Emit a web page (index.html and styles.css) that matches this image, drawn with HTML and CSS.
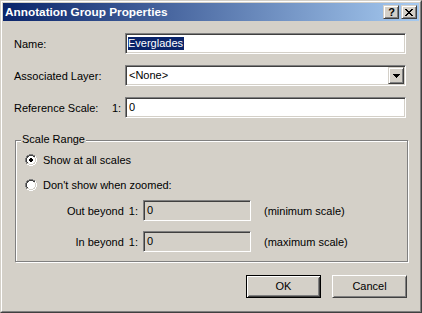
FILE: index.html
```html
<!DOCTYPE html>
<html>
<head>
<meta charset="utf-8">
<title>Annotation Group Properties</title>
<link rel="stylesheet" href="styles.css">
</head>
<body>
<div class="window">
  <div class="window-inner">
    <div class="titlebar">
      <span class="title">Annotation Group Properties</span>
      <div class="cap-btns">
        <div class="cap-btn help">?</div>
        <div class="cap-btn close">
          <svg width="8" height="7" viewBox="0 0 8 7"><path fill="#000" d="M0 0h2v1h-2zM6 0h2v1h-2zM1 1h2v1h-2zM5 1h2v1h-2zM2 2h4v1h-4zM3 3h2v1h-2zM2 4h4v1h-4zM1 5h2v1h-2zM5 5h2v1h-2zM0 6h2v1h-2zM6 6h2v1h-2z"/></svg>
        </div>
      </div>
    </div>
    <div class="content">
      <div class="fields">
        <label class="lbl span2">Name:</label>
        <div class="textbox"><span class="sel">Everglades</span></div>

        <label class="lbl span2">Associated Layer:</label>
        <div class="textbox combo">
          <span class="combo-text">&lt;None&gt;</span>
          <div class="drop-btn">
            <svg width="7" height="4" viewBox="0 0 7 4"><path fill="#000" d="M0 0h7v1h-1v1h-1v1h-1v1h-1v-1h-1v-1h-1v-1h-1z"/></svg>
          </div>
        </div>

        <label class="lbl">Reference Scale:</label>
        <span class="lbl one">1:</span>
        <div class="textbox"><span class="val">0</span></div>
      </div>

      <div class="group">
        <span class="legend">Scale Range</span>
        <div class="radio-row first">
          <span class="radio checked"><svg width="12" height="12" viewBox="0 0 12 12"><path fill="#808080" d="M4 0h4v1h-4zM2 1h2v1h-2zM8 1h2v1h-2zM1 2h1v2h-1zM0 4h1v4h-1zM1 8h1v2h-1z"/><path fill="#404040" d="M4 1h4v1h-4zM2 2h2v1h-2zM8 2h2v1h-2zM2 3h1v1h-1zM1 4h1v4h-1zM2 8h1v1h-1z"/><path fill="#fff" d="M10 2h1v2h-1zM11 4h1v4h-1zM10 8h1v2h-1zM8 10h2v1h-2zM2 10h2v1h-2zM4 11h4v1h-4z"/><path fill="#d4d0c8" d="M9 3h1v1h-1zM10 4h1v4h-1zM9 8h1v1h-1zM8 9h1v1h-1zM3 9h1v1h-1zM4 10h4v1h-4z"/><path fill="#fff" d="M4 2h4v1h-4zM3 3h6v1h-6zM2 4h8v4h-8zM3 8h6v1h-6zM4 9h4v1h-4z"/><path class="dot" fill="#000" d="M5 4h2v1h-2zM4 5h4v2h-4zM5 7h2v1h-2z"/></svg></span>
          <span class="radio-text">Show at all scales</span>
        </div>
        <div class="radio-row second">
          <span class="radio"><svg width="12" height="12" viewBox="0 0 12 12"><path fill="#808080" d="M4 0h4v1h-4zM2 1h2v1h-2zM8 1h2v1h-2zM1 2h1v2h-1zM0 4h1v4h-1zM1 8h1v2h-1z"/><path fill="#404040" d="M4 1h4v1h-4zM2 2h2v1h-2zM8 2h2v1h-2zM2 3h1v1h-1zM1 4h1v4h-1zM2 8h1v1h-1z"/><path fill="#fff" d="M10 2h1v2h-1zM11 4h1v4h-1zM10 8h1v2h-1zM8 10h2v1h-2zM2 10h2v1h-2zM4 11h4v1h-4z"/><path fill="#d4d0c8" d="M9 3h1v1h-1zM10 4h1v4h-1zM9 8h1v1h-1zM8 9h1v1h-1zM3 9h1v1h-1zM4 10h4v1h-4z"/><path fill="#fff" d="M4 2h4v1h-4zM3 3h6v1h-6zM2 4h8v4h-8zM3 8h6v1h-6zM4 9h4v1h-4z"/></svg></span>
          <span class="radio-text">Don't show when zoomed:</span>
        </div>
        <div class="range-row out">
          <span class="range-lbl">Out beyond<span class="one-b">1:</span></span>
          <div class="textbox disabled"><span class="val">0</span></div>
          <span class="hint">(minimum scale)</span>
        </div>
        <div class="range-row in">
          <span class="range-lbl">In beyond<span class="one-b">1:</span></span>
          <div class="textbox disabled"><span class="val">0</span></div>
          <span class="hint">(maximum scale)</span>
        </div>
      </div>

      <div class="buttons">
        <div class="btn default">OK</div>
        <div class="btn">Cancel</div>
      </div>
    </div>
  </div>
</div>
</body>
</html>
```

FILE: styles.css
```css
html, body {
  margin: 0;
  padding: 0;
  background: #d4d0c8;
}

body {
  font-family: "Liberation Sans", Arial, sans-serif;
  font-size: 11px;
  color: #000;
}

.window {
  width: 422px;
  height: 313px;
  box-sizing: border-box;
  border: 1px solid;
  border-color: #d4d0c8 #404040 #404040 #d4d0c8;
  background: #d4d0c8;
}

.window-inner {
  height: 100%;
  box-sizing: border-box;
  border: 1px solid;
  border-color: #fff #808080 #808080 #fff;
  padding: 1px;
  display: flex;
  flex-direction: column;
}

.titlebar {
  height: 18px;
  flex: none;
  display: flex;
  align-items: center;
  padding: 0 2px;
  background: linear-gradient(90deg, #0a246a 0%, #a6caf0 100%);
}

.title {
  flex: 1;
  color: #fff;
  font-weight: bold;
  font-size: 11.8px;
  line-height: 13px;
  white-space: nowrap;
}

.cap-btns {
  display: flex;
  gap: 2px;
}

.cap-btn {
  width: 16px;
  height: 14px;
  box-sizing: border-box;
  border: 1px solid;
  border-color: #d4d0c8 #404040 #404040 #d4d0c8;
  box-shadow: inset 1px 1px 0 #fff, inset -1px -1px 0 #808080;
  background: #d4d0c8;
  display: flex;
  align-items: center;
  justify-content: center;
}

.cap-btn.help {
  font-weight: bold;
  font-size: 11px;
  line-height: 11px;
  padding-left: 1px;
}

.content {
  flex: 1;
  display: flex;
  flex-direction: column;
  padding-top: 12px;
}

.fields {
  display: grid;
  grid-template-columns: 98px 13px 281px;
  grid-auto-rows: 21px;
  row-gap: 11px;
  margin-left: 11px;
  align-items: center;
}

.lbl {
  white-space: nowrap;
}

.span2 {
  grid-column: 1 / 3;
}

.textbox {
  height: 21px;
  box-sizing: border-box;
  border: 1px solid;
  border-color: #808080 #fff #fff #808080;
  box-shadow: inset 1px 1px 0 #404040, inset -1px -1px 0 #d4d0c8;
  background: #fff;
  display: flex;
  align-items: center;
  padding: 0 2px;
}

.sel {
  background: #0a246a;
  color: #fff;
  line-height: 13px;
  padding: 0 1px 0 0;
}

.val, .combo-text {
  line-height: 13px;
  padding-left: 1px;
}

.combo {
  padding-right: 1px;
}

.combo-text {
  flex: 1;
}

.drop-btn {
  width: 16px;
  height: 17px;
  box-sizing: border-box;
  border: 1px solid;
  border-color: #d4d0c8 #404040 #404040 #d4d0c8;
  box-shadow: inset 1px 1px 0 #fff, inset -1px -1px 0 #808080;
  background: #d4d0c8;
  display: flex;
  align-items: center;
  justify-content: center;
}

.drop-btn svg {
  display: block;
  margin-top: 1px;
}

.group {
  position: relative;
  margin: 22px 0 0 12px;
  width: 393px;
  height: 122px;
  box-sizing: border-box;
  border: 1px solid #808080;
  box-shadow: inset 1px 1px 0 #fff, 1px 1px 0 #fff;
  padding-top: 13px;
}

.legend {
  position: absolute;
  left: 5px;
  top: -8px;
  padding: 0 1px;
  line-height: 13px;
  background: #d4d0c8;
}

.radio-row {
  display: flex;
  align-items: center;
  height: 12px;
  margin-left: 9px;
}

.radio-row.second {
  margin-top: 13px;
}

.radio {
  width: 12px;
  height: 12px;
  flex: none;
}

.radio svg {
  display: block;
}

.radio-text {
  margin-left: 6px;
  line-height: 13px;
  white-space: nowrap;
}

.range-row {
  display: flex;
  align-items: center;
  height: 21px;
}

.range-row.out {
  margin-top: 9px;
}

.range-row.in {
  margin-top: 10px;
}

.range-lbl {
  width: 122px;
  text-align: right;
  white-space: nowrap;
}

.one-b {
  margin-left: 5px;
}

.textbox.disabled {
  width: 108px;
  margin-left: 5px;
  background: #d4d0c8;
}

.hint {
  margin-left: 13px;
  white-space: nowrap;
}

.buttons {
  display: flex;
  justify-content: flex-end;
  gap: 11px;
  margin-top: 13px;
  padding-right: 12px;
}

.btn {
  width: 75px;
  height: 23px;
  box-sizing: border-box;
  border: 1px solid;
  border-color: #fff #404040 #404040 #fff;
  box-shadow: inset 1px 1px 0 #d4d0c8, inset -1px -1px 0 #808080;
  background: #d4d0c8;
  display: flex;
  align-items: center;
  justify-content: center;
  line-height: 13px;
}

.btn.default {
  border-color: #000;
  box-shadow: inset 1px 1px 0 #fff, inset -1px -1px 0 #404040, inset 2px 2px 0 #d4d0c8, inset -2px -2px 0 #808080;
}
```
